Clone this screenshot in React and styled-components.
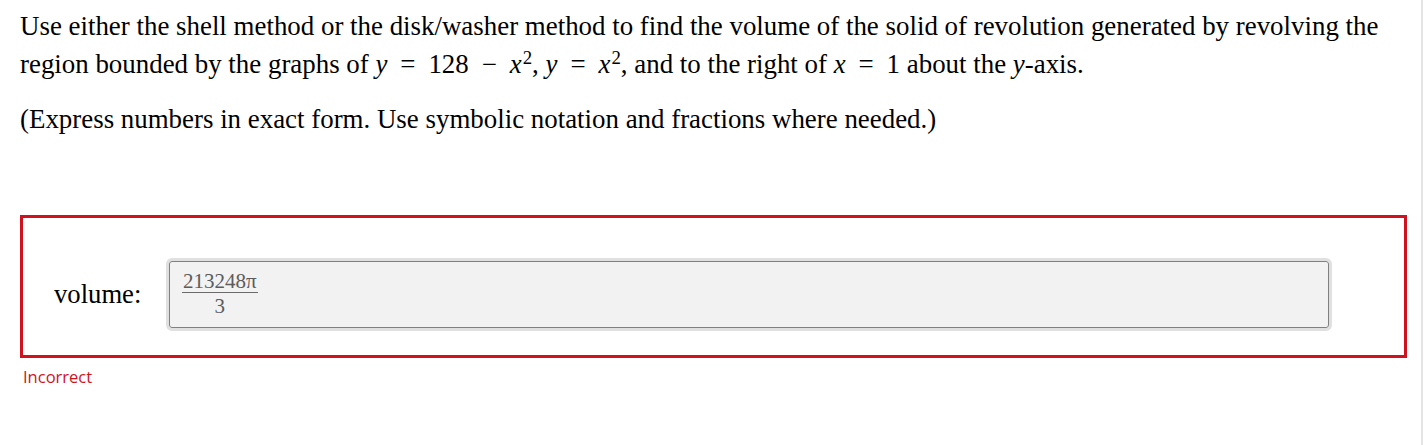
import React from "react";
import styled, { createGlobalStyle } from "styled-components";

const Global = createGlobalStyle`
  html, body { margin: 0; padding: 0; background: #fff; }
  body { font-family: "Liberation Serif", "Times New Roman", serif; color: #000; }
`;

const Page = styled.div`
  width: 1426px;
  height: 445px;
  display: flex;
  overflow: hidden;
`;

const Main = styled.main`
  width: 1423px;
  box-sizing: border-box;
  padding: 7px 14px 0 20px;
  border-right: 2px solid #e4e4e4;
`;

const Para = styled.p`
  margin: 0 0 ${(p) => p.$gap || 0}px;
  font-size: 26.9px;
  line-height: 38px;
  white-space: nowrap;
`;

const I = styled.i`
  font-style: italic;
`;

const Op = styled.span`
  margin: 0 0.48em;
`;

const Sup = styled.sup`
  display: inline-block;
  font-size: 0.7em;
  line-height: 1;
  vertical-align: 0.5em;
  margin-left: 1px;
`;

const AnswerBox = styled.section`
  margin-top: 77px;
  height: 143px;
  box-sizing: border-box;
  border: 3px solid #d0121f;
  padding: 40px 72px 24px 31px;
  display: flex;
  align-items: center;
`;

const Label = styled.span`
  font-size: 26.67px;
  width: 112px;
  flex: none;
`;

const InputRing = styled.div`
  flex: 1;
  height: 73px;
  box-sizing: border-box;
  border: 3px solid #e0e0e0;
  border-radius: 6px;
  display: flex;
`;

const InputField = styled.div`
  flex: 1;
  border: 1px solid #808080;
  border-radius: 3px;
  background: #f2f2f2;
  padding: 8px 0 0 12px;
  display: flex;
  align-items: flex-start;
`;

const Fraction = styled.span`
  display: inline-flex;
  flex-direction: column;
  align-items: center;
  color: #5c5c5c;
  font-size: 21px;
  line-height: 22px;
`;

const Num = styled.span`
  padding: 0 1px;
  border-bottom: 1px solid #6a6a6a;
`;

const Den = styled.span`
  padding-top: 2px;
`;

const Feedback = styled.div`
  margin-top: 8px;
  padding-left: 3px;
  font-family: "Open Sans", "Liberation Sans", sans-serif;
  font-size: 16.5px;
  line-height: 22px;
  color: #d0121f;
`;

export default function App() {
  return (
    <Page>
      <Global />
      <Main>
        <Para $gap={17}>
          Use either the shell method or the disk/washer method to find the volume of the solid of revolution generated by revolving the
          <br />
          region bounded by the graphs of <I>y</I>
          <Op>=</Op>128<Op>−</Op>
          <I>x</I>
          <Sup>2</Sup>, <I>y</I>
          <Op>=</Op>
          <I>x</I>
          <Sup>2</Sup>, and to the right of <I>x</I>
          <Op>=</Op>1 about the <I>y</I>-axis.
        </Para>
        <Para>(Express numbers in exact form. Use symbolic notation and fractions where needed.)</Para>
        <AnswerBox>
          <Label>volume:</Label>
          <InputRing>
            <InputField>
              <Fraction>
                <Num>213248π</Num>
                <Den>3</Den>
              </Fraction>
            </InputField>
          </InputRing>
        </AnswerBox>
        <Feedback>Incorrect</Feedback>
      </Main>
    </Page>
  );
}
